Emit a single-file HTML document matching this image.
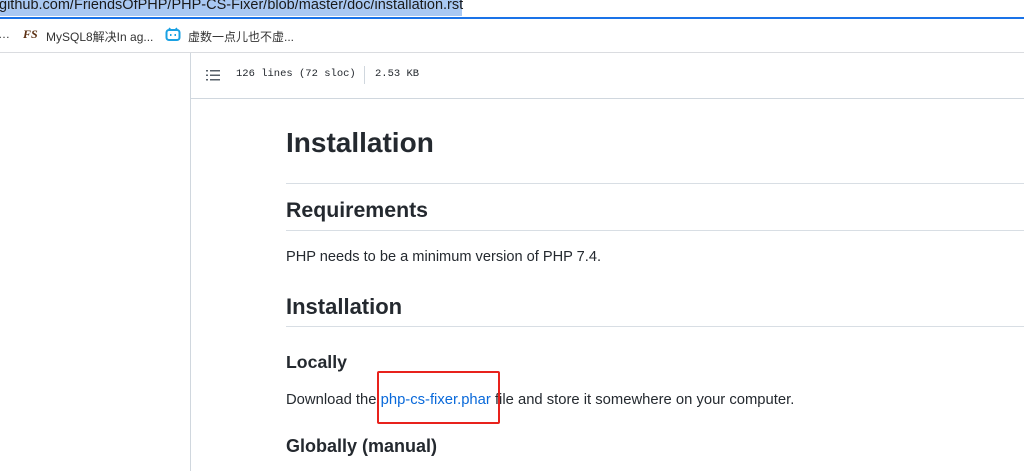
<!DOCTYPE html>
<html><head><meta charset="utf-8"><style>
body{margin:0;width:1024px;height:471px;overflow:hidden;background:#fff;font-family:"Liberation Sans","Noto Sans CJK SC",sans-serif;color:#24292f;position:relative}
.a{position:absolute;white-space:nowrap}
</style></head><body>
<div class="a" style="left:0;top:0;width:462px;height:16px;background:#a9c8f2"></div>
<div class="a" style="left:-1px;top:-3px;font-size:14.5px;color:#1a1a1a">github.com/FriendsOfPHP/PHP-CS-Fixer/blob/master/doc/installation.rst</div>
<div class="a" style="left:0;top:17px;width:1024px;height:2px;background:#1a73e8"></div>
<div class="a" style="left:0;top:19px;width:1024px;height:33px;background:#fff;border-bottom:1px solid #dadce0"></div>
<div class="a" style="left:-2px;top:27px;font-size:12px;color:#333">…</div>
<div class="a" style="left:23px;top:27px;font-size:12px;font-style:italic;font-weight:bold;font-family:'Liberation Serif',serif;color:#5a2e10">FS</div>
<div class="a" style="left:46px;top:28px;font-size:12px;color:#333">MySQL8解决In ag...</div>
<svg class="a" style="left:165px;top:27px" width="16" height="15" viewBox="0 0 16 15"><rect x="1.5" y="3" width="13" height="10" rx="2.5" fill="none" stroke="#1aa1e3" stroke-width="2"/><path d="M4 1l2 2M12 1l-2 2" stroke="#1aa1e3" stroke-width="1.5"/><rect x="5" y="7" width="1.5" height="2" fill="#1aa1e3"/><rect x="9.5" y="7" width="1.5" height="2" fill="#1aa1e3"/></svg>
<div class="a" style="left:188px;top:28px;font-size:12px;color:#333">虚数一点儿也不虚...</div>
<div class="a" style="left:190px;top:53px;width:1px;height:418px;background:#d0d7de"></div>
<div class="a" style="left:191px;top:98px;width:833px;height:1px;background:#d0d7de"></div>
<svg class="a" style="left:206px;top:69px" width="14" height="13" viewBox="0 0 14 13"><g fill="#57606a"><rect x="0" y="1" width="2" height="1.5"/><rect x="0" y="5.5" width="2" height="1.5"/><rect x="0" y="10" width="2" height="1.5"/><rect x="4" y="1" width="10" height="1.5"/><rect x="4" y="5.5" width="10" height="1.5"/><rect x="4" y="10" width="10" height="1.5"/></g></svg>
<div class="a" style="left:236px;top:68px;font-size:10.5px;font-family:'Liberation Mono',monospace;color:#24292f">126 lines (72 sloc)</div>
<div class="a" style="left:364px;top:66px;width:1px;height:18px;background:#d0d7de"></div>
<div class="a" style="left:375px;top:68px;font-size:10.5px;font-family:'Liberation Mono',monospace;color:#24292f">2.53 KB</div>
<div class="a" style="left:286px;top:127px;font-size:28px;font-weight:600">Installation</div>
<div class="a" style="left:286px;top:183px;width:738px;height:1px;background:#d8dee4"></div>
<div class="a" style="left:286px;top:198px;font-size:21.3px;font-weight:600">Requirements</div>
<div class="a" style="left:286px;top:230px;width:738px;height:1px;background:#d8dee4"></div>
<div class="a" style="left:286px;top:249px;font-size:14.6px">PHP needs to be a minimum version of PHP 7.4.</div>
<div class="a" style="left:286px;top:294px;font-size:22px;font-weight:600">Installation</div>
<div class="a" style="left:286px;top:326px;width:738px;height:1px;background:#d8dee4"></div>
<div class="a" style="left:286px;top:352px;font-size:17.7px;font-weight:600">Locally</div>
<div class="a" style="left:286px;top:392px;font-size:14.8px">Download the <span style="color:#0969da">php-cs-fixer.phar</span> file and store it somewhere on your computer.</div>
<div class="a" style="left:377px;top:371px;width:123px;height:53px;border:2px solid #e8221c;border-radius:2px;box-sizing:border-box"></div>
<div class="a" style="left:286px;top:436px;font-size:18px;font-weight:600">Globally (manual)</div>
</body></html>
